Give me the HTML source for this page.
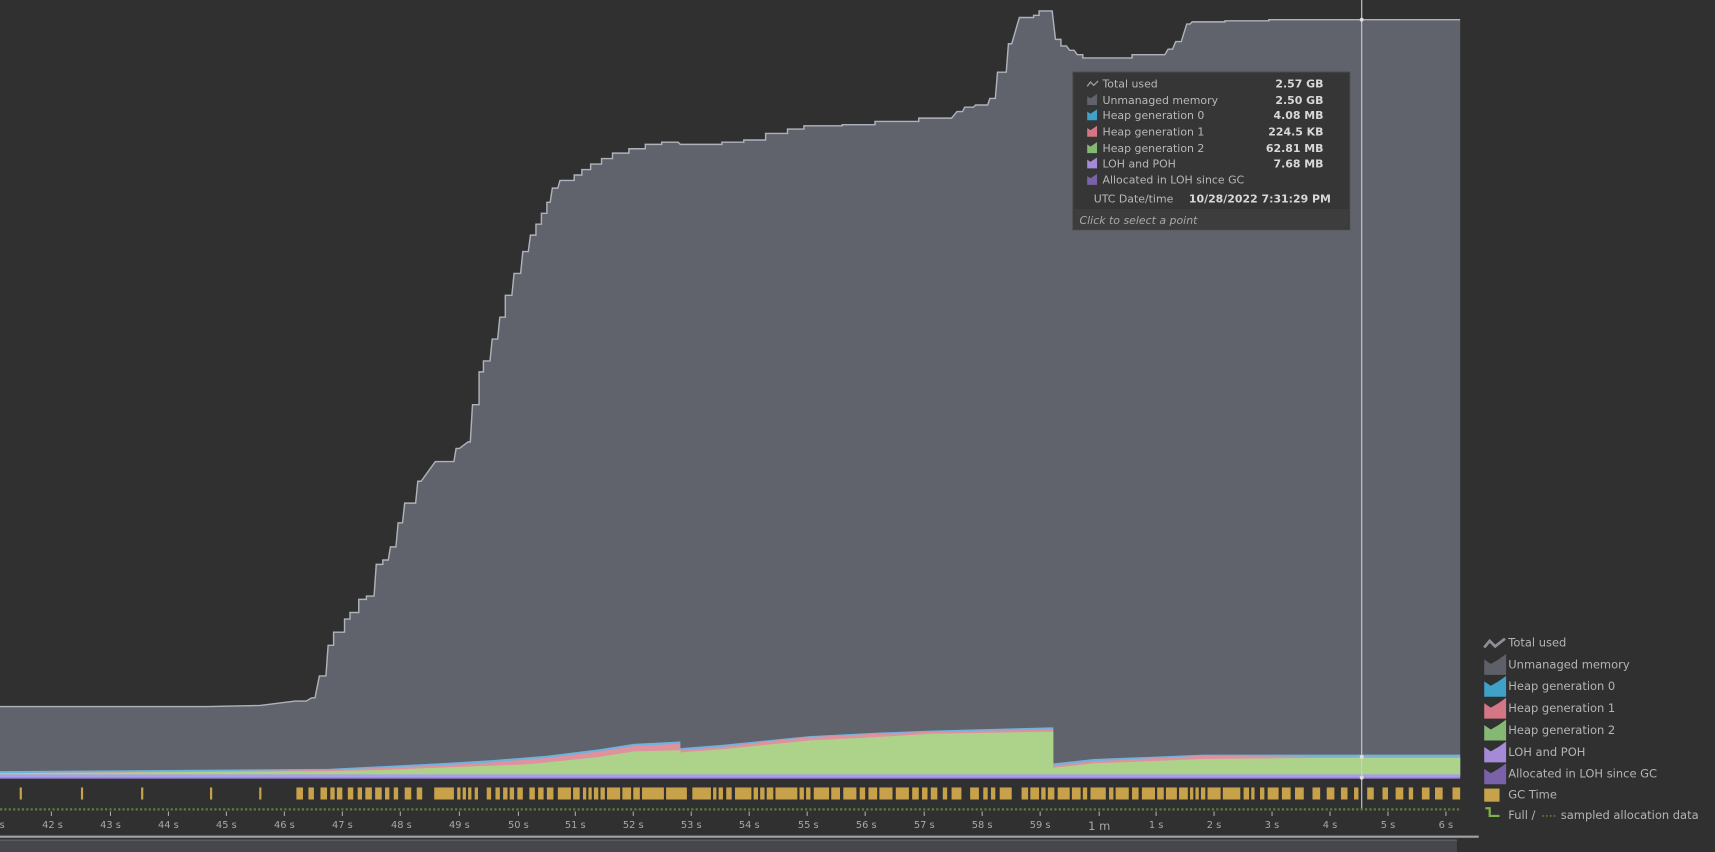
<!DOCTYPE html>
<html><head><meta charset="utf-8"><style>
html,body{margin:0;padding:0;background:#303030;overflow:hidden}
svg{display:block}
text{font-family:"DejaVu Sans","Liberation Sans",sans-serif}
</style></head><body>
<svg width="1715" height="852" viewBox="0 0 1568 779" preserveAspectRatio="none" xmlns="http://www.w3.org/2000/svg">
<rect width="1568" height="779" fill="#303030"/>
<polygon fill="#60636c" points="0,711 0,646 190,646 238,645 270,641 280,641 285,638 288,638 292,618 298,618 300,590 305,590 305,578 315,578 315,566 320,566 320,560 328,560 328,548 335,548 335,545 342,545 344,516 350,516 350,512 355,512 357,500 362,500 364,478 368,478 370,460 380,460 382,440 385,440 398,422 415,422 417,410 420,410 428,404 430,404 432,370 438,370 438,340 442,340 442,330 448,330 450,310 455,310 457,290 462,290 462,270 468,270 470,250 476,250 478,230 483,230 485,215 490,215 490,205 495,205 495,195 500,195 500,185 503,185 505,172 510,172 512,165 525,165 525,160 532,160 532,155 540,155 540,150 550,150 550,145 560,145 560,140 575,140 575,136 590,136 590,132 605,132 605,130 620,130 622,132 660,132 660,130 680,130 680,128 700,128 700,122 720,122 720,118 735,118 735,115 770,115 770,114 800,114 800,111 840,111 840,108 870,108 875,102 880,102 882,98 890,98 892,96 903,96 905,90 910,90 912,66 920,66 922,40 925,40 932,16 945,16 945,14 950,14 950,10 962,10 965,36 970,36 970,42 975,42 978,46 982,46 985,50 990,50 990,53 1035,53 1035,50 1065,50 1068,45 1072,45 1075,38 1080,38 1085,22 1088,22 1090,20 1120,20 1120,19 1160,19 1160,18 1335,18 1335,711"/>
<polyline fill="none" stroke="#aeb3bb" stroke-width="1.3" points="0,646 190,646 238,645 270,641 280,641 285,638 288,638 292,618 298,618 300,590 305,590 305,578 315,578 315,566 320,566 320,560 328,560 328,548 335,548 335,545 342,545 344,516 350,516 350,512 355,512 357,500 362,500 364,478 368,478 370,460 380,460 382,440 385,440 398,422 415,422 417,410 420,410 428,404 430,404 432,370 438,370 438,340 442,340 442,330 448,330 450,310 455,310 457,290 462,290 462,270 468,270 470,250 476,250 478,230 483,230 485,215 490,215 490,205 495,205 495,195 500,195 500,185 503,185 505,172 510,172 512,165 525,165 525,160 532,160 532,155 540,155 540,150 550,150 550,145 560,145 560,140 575,140 575,136 590,136 590,132 605,132 605,130 620,130 622,132 660,132 660,130 680,130 680,128 700,128 700,122 720,122 720,118 735,118 735,115 770,115 770,114 800,114 800,111 840,111 840,108 870,108 875,102 880,102 882,98 890,98 892,96 903,96 905,90 910,90 912,66 920,66 922,40 925,40 932,16 945,16 945,14 950,14 950,10 962,10 965,36 970,36 970,42 975,42 978,46 982,46 985,50 990,50 990,53 1035,53 1035,50 1065,50 1068,45 1072,45 1075,38 1080,38 1085,22 1088,22 1090,20 1120,20 1120,19 1160,19 1160,18 1335,18"/>
<polygon fill="#6fb3dc" points="0,709 0,705 300,703 400,698 450,695 500,691 548,685 580,680 622,678 622,684 660,681 700,677 740,673 800,670 850,668 960,665 963,665 963,698 1000,694 1100,690 1200,690 1335,690 1335,709"/>
<polygon fill="#e0919e" points="0,709 0,707 300,704 400,700 450,697 500,693 548,687 580,682 622,680 622,686 660,683 700,678 740,674 800,671 850,669 960,667 963,667 963,700 1000,696 1100,691 1200,692 1335,692 1335,709"/>
<polygon fill="#add38a" points="0,709 0,707 300,705 350,704 400,702 450,700 480,699 500,697 530,694 548,692 580,687 622,686 622,688 660,685 700,681 740,677 800,674 850,671 960,669 963,669 963,702 1000,698 1050,696 1100,694 1200,693 1335,693 1335,709"/>
<rect x="0" y="708" width="1335" height="4" fill="#a99ee8"/>
<rect x="0" y="711" width="1335" height="1" fill="#7f6fb0"/>
<line x1="1245" y1="0" x2="1245" y2="741" stroke="#cfcfcf" stroke-width="1"/>
<circle cx="1245" cy="18" r="1.8" fill="#ddd"/>
<circle cx="1245" cy="692" r="1.8" fill="#ddd"/>
<circle cx="1245" cy="711" r="1.8" fill="#ddd"/>
<g fill="#c8a24b">
<rect x="18" y="720" width="2" height="11"/><rect x="74" y="720" width="2" height="11"/><rect x="129" y="720" width="2" height="11"/><rect x="192" y="720" width="2" height="11"/><rect x="237" y="720" width="2" height="11"/>
<rect x="271" y="720" width="6" height="11"/><rect x="282" y="720" width="5" height="11"/><rect x="293" y="720" width="6" height="11"/><rect x="302" y="720" width="4" height="11"/><rect x="308" y="720" width="5" height="11"/><rect x="318" y="720" width="5" height="11"/><rect x="327" y="720" width="4" height="11"/><rect x="334" y="720" width="6" height="11"/><rect x="343" y="720" width="6" height="11"/><rect x="352" y="720" width="4" height="11"/><rect x="360" y="720" width="4" height="11"/><rect x="370" y="720" width="6" height="11"/><rect x="381" y="720" width="5" height="11"/>
<rect x="397" y="720" width="18" height="11"/><rect x="418" y="720" width="3" height="11"/><rect x="423" y="720" width="3" height="11"/><rect x="428" y="720" width="3" height="11"/><rect x="434" y="720" width="3" height="11"/><rect x="445" y="720" width="4" height="11"/><rect x="453" y="720" width="4" height="11"/><rect x="460" y="720" width="4" height="11"/><rect x="466" y="720" width="4" height="11"/><rect x="473" y="720" width="5" height="11"/>
<rect x="484" y="720" width="5" height="11"/><rect x="492" y="720" width="5" height="11"/><rect x="500" y="720" width="6" height="11"/><rect x="510" y="720" width="12" height="11"/><rect x="524" y="720" width="6" height="11"/><rect x="533" y="720" width="3" height="11"/><rect x="538" y="720" width="3" height="11"/><rect x="543" y="720" width="4" height="11"/><rect x="549" y="720" width="4" height="11"/><rect x="555" y="720" width="12" height="11"/><rect x="569" y="720" width="8" height="11"/><rect x="579" y="720" width="6" height="11"/><rect x="587" y="720" width="20" height="11"/><rect x="609" y="720" width="19" height="11"/>
<rect x="633" y="720" width="17" height="11"/><rect x="652" y="720" width="3" height="11"/><rect x="657" y="720" width="4" height="11"/><rect x="664" y="720" width="5" height="11"/><rect x="672" y="720" width="15" height="11"/><rect x="689" y="720" width="4" height="11"/><rect x="695" y="720" width="4" height="11"/><rect x="701" y="720" width="6" height="11"/><rect x="709" y="720" width="20" height="11"/><rect x="731" y="720" width="4" height="11"/><rect x="737" y="720" width="4" height="11"/><rect x="744" y="720" width="14" height="11"/><rect x="760" y="720" width="8" height="11"/><rect x="771" y="720" width="12" height="11"/><rect x="786" y="720" width="5" height="11"/><rect x="794" y="720" width="8" height="11"/><rect x="804" y="720" width="12" height="11"/><rect x="819" y="720" width="12" height="11"/><rect x="834" y="720" width="6" height="11"/><rect x="843" y="720" width="5" height="11"/><rect x="851" y="720" width="6" height="11"/><rect x="862" y="720" width="4" height="11"/><rect x="870" y="720" width="9" height="11"/><rect x="887" y="720" width="8" height="11"/><rect x="899" y="720" width="4" height="11"/><rect x="906" y="720" width="4" height="11"/><rect x="914" y="720" width="11" height="11"/>
<rect x="934" y="720" width="6" height="11"/><rect x="942" y="720" width="8" height="11"/><rect x="952" y="720" width="4" height="11"/><rect x="958" y="720" width="6" height="11"/><rect x="967" y="720" width="11" height="11"/><rect x="980" y="720" width="8" height="11"/><rect x="990" y="720" width="4" height="11"/><rect x="997" y="720" width="14" height="11"/><rect x="1014" y="720" width="4" height="11"/><rect x="1020" y="720" width="12" height="11"/><rect x="1035" y="720" width="6" height="11"/><rect x="1044" y="720" width="12" height="11"/><rect x="1058" y="720" width="6" height="11"/><rect x="1066" y="720" width="10" height="11"/><rect x="1078" y="720" width="8" height="11"/><rect x="1088" y="720" width="3" height="11"/><rect x="1093" y="720" width="3" height="11"/><rect x="1098" y="720" width="4" height="11"/><rect x="1104" y="720" width="12" height="11"/><rect x="1118" y="720" width="16" height="11"/><rect x="1137" y="720" width="5" height="11"/><rect x="1144" y="720" width="3" height="11"/><rect x="1152" y="720" width="4" height="11"/><rect x="1159" y="720" width="10" height="11"/><rect x="1172" y="720" width="8" height="11"/><rect x="1184" y="720" width="8" height="11"/><rect x="1200" y="720" width="7" height="11"/><rect x="1213" y="720" width="7" height="11"/><rect x="1226" y="720" width="6" height="11"/><rect x="1238" y="720" width="4" height="11"/><rect x="1250" y="720" width="6" height="11"/><rect x="1264" y="720" width="5" height="11"/><rect x="1276" y="720" width="7" height="11"/><rect x="1288" y="720" width="4" height="11"/><rect x="1300" y="720" width="7" height="11"/><rect x="1312" y="720" width="7" height="11"/><rect x="1328" y="720" width="7" height="11"/>
</g>
<line x1="0" y1="740" x2="1335" y2="740" stroke="#5e7d3c" stroke-width="2" stroke-dasharray="2,2"/>
<g stroke="#aaa" stroke-width="1">
<line x1="47" y1="742" x2="47" y2="746"/><line x1="101" y1="742" x2="101" y2="746"/><line x1="154" y1="742" x2="154" y2="746"/><line x1="207" y1="742" x2="207" y2="746"/><line x1="260" y1="742" x2="260" y2="746"/><line x1="313" y1="742" x2="313" y2="746"/><line x1="366" y1="742" x2="366" y2="746"/><line x1="420" y1="742" x2="420" y2="746"/><line x1="474" y1="742" x2="474" y2="746"/><line x1="526" y1="742" x2="526" y2="746"/><line x1="579" y1="742" x2="579" y2="746"/><line x1="632" y1="742" x2="632" y2="746"/><line x1="685" y1="742" x2="685" y2="746"/><line x1="738" y1="742" x2="738" y2="746"/><line x1="791" y1="742" x2="791" y2="746"/><line x1="845" y1="742" x2="845" y2="746"/><line x1="898" y1="742" x2="898" y2="746"/><line x1="951" y1="742" x2="951" y2="746"/><line x1="1005" y1="742" x2="1005" y2="746"/><line x1="1057" y1="742" x2="1057" y2="746"/><line x1="1110" y1="742" x2="1110" y2="746"/><line x1="1163" y1="742" x2="1163" y2="746"/><line x1="1216" y1="742" x2="1216" y2="746"/><line x1="1269" y1="742" x2="1269" y2="746"/><line x1="1322" y1="742" x2="1322" y2="746"/>
</g>
<g fill="#a8a8a8" font-size="9" text-anchor="middle">
<text x="2" y="757">s</text><text x="48" y="757">42 s</text><text x="101" y="757">43 s</text><text x="154" y="757">44 s</text><text x="207" y="757">45 s</text><text x="260" y="757">46 s</text><text x="313" y="757">47 s</text><text x="367" y="757">48 s</text><text x="420" y="757">49 s</text><text x="474" y="757">50 s</text><text x="526" y="757">51 s</text><text x="579" y="757">52 s</text><text x="632" y="757">53 s</text><text x="685" y="757">54 s</text><text x="739" y="757">55 s</text><text x="792" y="757">56 s</text><text x="845" y="757">57 s</text><text x="898" y="757">58 s</text><text x="951" y="757">59 s</text><text x="1005" y="759" font-size="10.5">1 m</text><text x="1057" y="757">1 s</text><text x="1110" y="757">2 s</text><text x="1163" y="757">3 s</text><text x="1216" y="757">4 s</text><text x="1269" y="757">5 s</text><text x="1322" y="757">6 s</text>
</g>
<rect x="0" y="764" width="1352" height="2" fill="#a0a0a0"/>
<rect x="0" y="767" width="1332" height="12" fill="#45474d"/>
<rect x="0" y="768" width="1332" height="1" fill="#5a5c62"/>
<rect x="981" y="66" width="253" height="144" fill="#363636" stroke="#454545"/>
<g font-size="10" fill="#b8b8b8">
<polyline points="994,79 997,75 1000,78 1004,74" fill="none" stroke="#9a9ea6" stroke-width="1.2"/>
<text x="1008" y="80">Total used</text>
<path d="M994,96 V88 L997,90 L1000,88 L1003,86 V96Z" fill="#60636c"/><text x="1008" y="95">Unmanaged memory</text>
<path d="M994,110 V102 L997,104 L1000,102 L1003,100 V110Z" fill="#3fa0c8"/><text x="1008" y="109">Heap generation 0</text>
<path d="M994,125 V117 L997,119 L1000,117 L1003,115 V125Z" fill="#d47685"/><text x="1008" y="124">Heap generation 1</text>
<path d="M994,140 V132 L997,134 L1000,132 L1003,130 V140Z" fill="#85b873"/><text x="1008" y="139">Heap generation 2</text>
<path d="M994,154 V146 L997,148 L1000,146 L1003,144 V154Z" fill="#a58ad8"/><text x="1008" y="153">LOH and POH</text>
<path d="M994,169 V161 L997,163 L1000,161 L1003,159 V169Z" fill="#7a62a8"/><text x="1008" y="168">Allocated in LOH since GC</text>
<text x="1000" y="185">UTC Date/time</text>
<g font-weight="bold" fill="#d8d8d8" text-anchor="end">
<text x="1210" y="80">2.57 GB</text><text x="1210" y="95">2.50 GB</text><text x="1210" y="109">4.08 MB</text><text x="1210" y="124">224.5 KB</text><text x="1210" y="139">62.81 MB</text><text x="1210" y="153">7.68 MB</text>
</g>
<text x="1087" y="185" font-weight="bold" fill="#d8d8d8">10/28/2022 7:31:29 PM</text>
</g>
<rect x="982" y="191" width="251" height="18" fill="#3d3d3d"/>
<text x="987" y="205" font-size="10" font-style="italic" fill="#a8a8a8">Click to select a point</text>
<g font-size="10.5" fill="#b4b4b4">
<polyline points="1357,592 1362,586 1367,591 1376,584" fill="none" stroke="#8c8f97" stroke-width="2.5"/>
<text x="1379" y="591">Total used</text>
<path d="M1357,617 V603 L1363,607 L1370,603 L1377,598 V617Z" fill="#5d6068"/><text x="1379" y="611">Unmanaged memory</text>
<path d="M1357,637 V623 L1363,627 L1370,623 L1377,618 V637Z" fill="#3fa0c8"/><text x="1379" y="631">Heap generation 0</text>
<path d="M1357,657 V643 L1363,647 L1370,643 L1377,638 V657Z" fill="#d47685"/><text x="1379" y="651">Heap generation 1</text>
<path d="M1357,677 V663 L1363,667 L1370,663 L1377,658 V677Z" fill="#85b873"/><text x="1379" y="671">Heap generation 2</text>
<path d="M1357,697 V683 L1363,687 L1370,683 L1377,678 V697Z" fill="#a58ad8"/><text x="1379" y="691">LOH and POH</text>
<path d="M1357,717 V703 L1363,707 L1370,703 L1377,698 V717Z" fill="#7a62a8"/><text x="1379" y="711">Allocated in LOH since GC</text>
<rect x="1357" y="721" width="14" height="12" fill="#c8a24b"/><text x="1379" y="730">GC Time</text>
<polyline points="1358,739 1362,739 1362,746 1371,746" fill="none" stroke="#7db24a" stroke-width="2"/>
<text x="1379" y="749">Full /</text>
<line x1="1410" y1="746" x2="1424" y2="746" stroke="#5e7d3c" stroke-width="1.5" stroke-dasharray="1.5,2"/>
<text x="1427" y="749">sampled allocation data</text>
</g>
</svg>
</body></html>
